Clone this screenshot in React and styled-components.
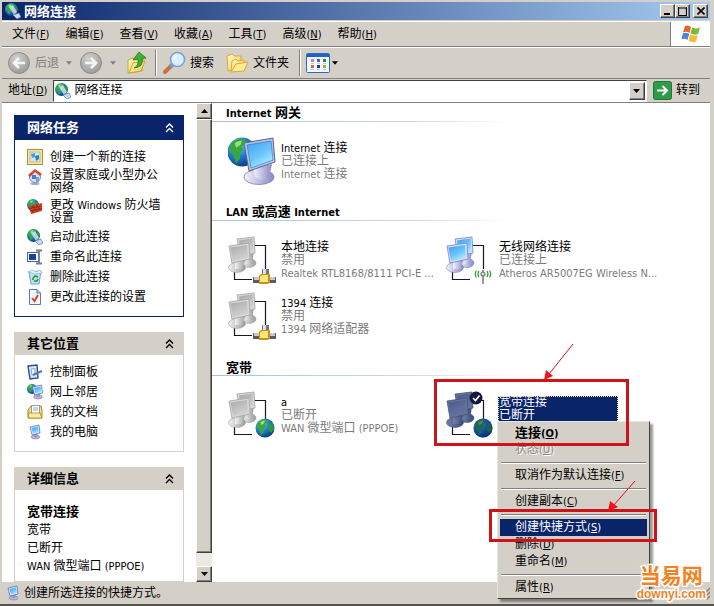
import React from "react";
import styled, { createGlobalStyle, css } from "styled-components";

const face = "#d4d0c8";
const navy = "#0a246a";
const red = "#cf1419";

const GlobalStyle = createGlobalStyle`
  * { box-sizing: border-box; }
  body {
    margin: 0;
    background: ${face};
    color: #000;
    font: 12px/13px "DejaVu Sans Condensed", "Noto Sans CJK SC", sans-serif;
  }
  button, input { font: inherit; color: inherit; }
  h1, h2, h3, p, ul { margin: 0; padding: 0; font: inherit; list-style: none; }
  a { color: inherit; text-decoration: none; }
`;

const raised = css`
  background: ${face};
  border: 1px solid;
  border-color: #fff #404040 #404040 #fff;
  box-shadow: inset -1px -1px 0 #808080;
`;

/* ---------- text ---------- */

const Latin = styled.span`
  font-size: 11px;
`;

function Mixed({ children }) {
  return children
    .split(/([\x20-\x7e]+)/)
    .filter(Boolean)
    .map((part, i) => (/^[\x20-\x7e]/.test(part) ? <Latin key={i}>{part}</Latin> : part));
}

function Mnemonic({ text, letter }) {
  return (
    <span>
      {text}
      <Latin>(<u>{letter}</u>)</Latin>
    </span>
  );
}

/* ---------- drawings ---------- */

const HiddenDefs = styled.svg`
  position: absolute;
`;

function Defs() {
  return (
    <HiddenDefs width="0" height="0" aria-hidden="true">
      <defs>
        <radialGradient id="globe" cx="0.35" cy="0.3" r="0.8">
          <stop offset="0" stopColor="#7fd4ff" />
          <stop offset="0.45" stopColor="#1f7fd8" />
          <stop offset="1" stopColor="#08306e" />
        </radialGradient>
        <linearGradient id="screenOn" x1="0" y1="0" x2="0.6" y2="1">
          <stop offset="0" stopColor="#3f9df0" />
          <stop offset="0.6" stopColor="#6cc6fb" />
          <stop offset="1" stopColor="#a8ecff" />
        </linearGradient>
        <linearGradient id="screenOff" x1="0" y1="0" x2="0.5" y2="1">
          <stop offset="0" stopColor="#a8a8a8" />
          <stop offset="1" stopColor="#d2d2d2" />
        </linearGradient>
        <linearGradient id="screenSel" x1="0" y1="0" x2="0.5" y2="1">
          <stop offset="0" stopColor="#4a5a88" />
          <stop offset="1" stopColor="#65749f" />
        </linearGradient>
        <linearGradient id="baseOn" x1="0" y1="0" x2="1" y2="0">
          <stop offset="0" stopColor="#f4f4fb" />
          <stop offset="1" stopColor="#8c86c6" />
        </linearGradient>
        <linearGradient id="baseOff" x1="0" y1="0" x2="1" y2="0">
          <stop offset="0" stopColor="#f2f2f2" />
          <stop offset="1" stopColor="#999" />
        </linearGradient>
        <linearGradient id="baseSel" x1="0" y1="0" x2="1" y2="0">
          <stop offset="0" stopColor="#7480a4" />
          <stop offset="1" stopColor="#3a4a78" />
        </linearGradient>
        <linearGradient id="folder" x1="0" y1="0" x2="1" y2="1">
          <stop offset="0" stopColor="#fffbd0" />
          <stop offset="1" stopColor="#f3c646" />
        </linearGradient>
        <radialGradient id="greyBall" cx="0.4" cy="0.3" r="0.8">
          <stop offset="0" stopColor="#d2d2d0" />
          <stop offset="1" stopColor="#949494" />
        </radialGradient>
      </defs>
    </HiddenDefs>
  );
}

function Globe({ cx, cy, r }) {
  return (
    <g transform={`translate(${cx} ${cy}) scale(${r / 10})`}>
      <circle r="10" fill="url(#globe)" />
      <path d="M-7 -6.500Q-3 -10 2 -9L3 -6L0 -4L1 -1L-2 1L-1 4L-4 8Q-5 5 -6 2L-9 -1Z" fill="#39a83a" />
      <path d="M4 -8L8 -4L9.500 1L7 5L4 3L3 -1L5 -4Z" fill="#2f9a3a" />
      <path d="M-5 -6Q-3 -8 0 -8L-1 -5L-4 -3Z" fill="#9be07a" />
    </g>
  );
}

const tones = {
  on: { edge: "#6f86c8", rim: "#d5dcf4", screen: "url(#screenOn)", base: "url(#baseOn)" },
  off: { edge: "#a2a2a2", rim: "#d8d8d8", screen: "url(#screenOff)", base: "url(#baseOff)" },
  sel: { edge: "#44537d", rim: "#66749c", screen: "url(#screenSel)", base: "url(#baseSel)" },
};

function Pair({ tone }) {
  const t = tones[tone];
  return (
    <>
      <ellipse cx="21" cy="27" rx="7" ry="4.500" fill={t.base} stroke={t.edge} strokeWidth="0.6" />
      <path d="M17 16L26 15L24 28L18 28Z" fill={t.base} />
      <path d="M9 3L26 1L27 17L12 20Z" fill={t.rim} stroke={t.edge} strokeWidth="0.8" />
      <path d="M11 4.500L24.500 2.500L25.500 15.500L13 18Z" fill={t.screen} />
      <ellipse cx="9" cy="31.500" rx="8.500" ry="5" fill={t.base} stroke={t.edge} strokeWidth="0.6" />
      <path d="M7 24L18 22L14 33L7 33Z" fill={t.base} />
      <path d="M1 10L21 7L22 23L4 27Z" fill={t.rim} stroke={t.edge} strokeWidth="0.8" />
      <path d="M2.500 11.500L19 9L20 21.500L5 25Z" fill={t.screen} />
    </>
  );
}

function Badge({ kind }) {
  if (kind === "wifi")
    return (
      <g fill="none" strokeWidth="1.200">
        <path d="M37 34V48" stroke="#9a9a9a" strokeWidth="2" />
        <circle cx="37" cy="38" r="2" fill="#ddd" stroke="#777" />
        <path d="M33 35Q31 38 33 41M41 35Q43 38 41 41M30.500 34.500Q28 38 30.500 41.500M43.500 34.500Q46 38 43.500 41.500" stroke="#2aa02a" />
      </g>
    );
  if (kind === "plug")
    return (
      <g>
        <rect x="34" y="33" width="7" height="9" fill="#777" />
        <rect x="35" y="33" width="3" height="8" fill="#ddd" />
        <rect x="25" y="41" width="23" height="6" fill="#5c5c5c" />
        <rect x="26" y="41" width="21" height="3" fill="#c9c9c9" />
        <path d="M31 40L33 38H42V46L40 48H31Z" fill="#c8921a" />
        <path d="M32 41L34 39H40V46H32Z" fill="#ffe47c" />
      </g>
    );
  return <Globe cx={37} cy={37} r={9.5} />;
}

function ConnectionIcon({ kind, tone, checked }) {
  if (kind === "gateway")
    return (
      <svg width="48" height="48" viewBox="0 0 48 48" aria-hidden="true">
        <Globe cx={14} cy={15} r={14.5} />
        <ellipse cx="31" cy="40" rx="15" ry="7.500" fill="url(#baseOn)" stroke="#7c78a8" strokeWidth="0.8" />
        <path d="M25 31L44 27L41 40Q34 45 27 40Z" fill="url(#baseOn)" />
        <path d="M16 6L45 1L47 25L21 34Z" fill="#b8c2dd" stroke="#56688f" />
        <path d="M19 8L43 4L45 23L23 31Z" fill="url(#screenOn)" stroke="#2d6fc4" strokeWidth="0.6" />
      </svg>
    );
  return (
    <svg width="48" height="48" viewBox="0 0 48 48" aria-hidden="true">
      <path d="M26 9.500H37.500V33M6.500 36V43.500H24" fill="none" stroke="#15152e" strokeWidth="1.200" />
      <Pair tone={tone} />
      <Badge kind={kind} />
      {tone === "sel" && <circle cx="37" cy="37" r="9.500" fill={navy} opacity="0.5" />}
      {checked && (
        <g>
          <circle cx="30" cy="7" r="6.500" fill="#12193f" />
          <path d="M27 7L29.500 9.500L33.500 4.500" fill="none" stroke="#fff" strokeWidth="1.600" />
        </g>
      )}
    </svg>
  );
}

function MiniMonitor({ x = 0, y = 0 }) {
  return (
    <g transform={`translate(${x} ${y})`}>
      <ellipse cx="6.500" cy="12" rx="4.500" ry="2" fill="#b9b4dc" stroke="#7874a0" strokeWidth="0.5" />
      <path d="M5 8H9L8 12H5Z" fill="#9c98cc" />
      <path d="M1 2L10 0L11 8L3 10Z" fill="#dfe8ff" stroke="#4468b0" strokeWidth="0.7" />
      <path d="M2.500 3L9 1.500L10 7L4 8.500Z" fill="url(#screenOn)" />
    </g>
  );
}

const small = {
  connections: (
    <>
      <Globe cx={6.5} cy={6.5} r={6.5} />
      <path d="M4 4L8 2L12 9L9 12Z" fill="#fff" opacity="0.65" />
      <path d="M8 12L14 10L16 14L12 16Z" fill="#c7dcf2" stroke="#5879a8" strokeWidth="0.7" />
    </>
  ),
  create: (
    <>
      <rect x="0.500" y="0.500" width="15" height="15" fill="#f5e6a6" stroke="#b28f36" />
      <rect x="3" y="3" width="10" height="10" fill="#cfe5fa" stroke="#d2bb6a" />
      <path d="M4 5L8 4V8L5 9Z" fill="#4b9be4" />
      <path d="M8 7L12 6V10L9 12Z" fill="#2f7fce" />
    </>
  ),
  home: (
    <>
      <ellipse cx="8" cy="14.500" rx="4.500" ry="1.500" fill="#a8a5c9" />
      <circle cx="8" cy="8" r="5.500" fill="#d6e6fa" stroke="#7390c8" />
      <path d="M1 6L8 0L15 5L13 7L8 3L3 8Z" fill="#d2482c" />
      <rect x="5" y="6" width="4" height="4" fill="#3f7fd0" />
      <rect x="9" y="8" width="3" height="5" fill="#7a9bd8" />
    </>
  ),
  firewall: (
    <>
      <Globe cx={6} cy={6} r={6} />
      <path d="M2 7L15 4V12L4 15Z" fill="#d6451d" />
      <path d="M2 9.500L15 7M3 12L15 9.500M6 6V9M10 5.500V8M8 9V11.500M12 8V10.500M6 11.500V14.500M10 10.500V13" stroke="#7d1f0a" strokeWidth="0.8" />
    </>
  ),
  rename: (
    <>
      <rect x="0.500" y="3.500" width="11" height="9" fill="#fff" stroke="#4a64a0" />
      <rect x="2" y="5" width="7" height="6" fill="#16439c" />
      <path d="M9 1.500H15M12 1.500V14.500M9 14.500H15" stroke="#6b7ba0" strokeWidth="1.800" />
    </>
  ),
  trash: (
    <>
      <path d="M2 3L14 2L12 15L4 15Z" fill="#bfe0f5" stroke="#6fa3cf" />
      <path d="M1 3L6 1L9 3L13 1L15 4L8 5Z" fill="#e9f6ff" stroke="#7fb0d8" strokeWidth="0.7" />
      <path d="M6 9L8 7L11 8M11 10L10 12L7 12M6 11L6 9" fill="none" stroke="#1d9b36" strokeWidth="1.600" />
    </>
  ),
  settings: (
    <>
      <path d="M2.500 0.500H10L13.500 4V15.500H2.500Z" fill="#f3f6fd" stroke="#5b78b4" />
      <path d="M10 0.500V4H13.500" fill="#b6c7e8" stroke="#5b78b4" />
      <path d="M5 9L7.500 12L11 6" fill="none" stroke="#e03a2c" strokeWidth="1.900" />
    </>
  ),
  panel: (
    <>
      <path d="M1 2L10 1L11 14L3 15Z" fill="#dbe8fa" stroke="#274f91" strokeWidth="1.400" />
      <path d="M4 5L8 4.500L8 10L5 11Z" fill="#fff" stroke="#7fa4d4" />
      <path d="M6 11L15 7" stroke="#4b78b8" strokeWidth="2" />
    </>
  ),
  places: (
    <>
      <Globe cx={5} cy={5} r={5} />
      <MiniMonitor x={4.5} y={1} />
    </>
  ),
  documents: (
    <>
      <path d="M1 6L4 2H14L15 6V14H1Z" fill="#f7df7c" stroke="#a98624" />
      <rect x="4.500" y="1.500" width="8" height="9" fill="#fff" stroke="#9a9a9a" />
      <path d="M6 4H11M6 6H11" stroke="#8fa5c8" />
      <path d="M1 9H13L15 14H2Z" fill="#ffefa5" stroke="#a98624" strokeWidth="0.8" />
    </>
  ),
  computer: <MiniMonitor x={2} y={1} />,
};

function SmallIcon({ name }) {
  return (
    <svg width="16" height="16" viewBox="0 0 16 16" aria-hidden="true">
      {small[name]}
    </svg>
  );
}

function Caret({ up, color = "#000", size = 7 }) {
  return (
    <svg width={size} height="4" viewBox="0 0 7 4" aria-hidden="true">
      <path d={up ? "M0 4H7L3.500 0Z" : "M0 0H7L3.500 4Z"} fill={color} />
    </svg>
  );
}

function Ball({ forward }) {
  return (
    <svg width="24" height="24" viewBox="0 0 24 24" aria-hidden="true">
      <circle cx="12" cy="12" r="10.500" fill="url(#greyBall)" stroke="#8c8c8c" />
      <path
        d={forward ? "M6 12H17M12 7L17 12L12 17" : "M18 12H7M12 7L7 12L12 17"}
        fill="none"
        stroke="#f4f4f2"
        strokeWidth="2.600"
      />
    </svg>
  );
}

function FolderUp() {
  return (
    <svg width="22" height="24" viewBox="0 0 22 24" aria-hidden="true">
      <path d="M2 9L7 7L9 9L17 8L16 20L2 22Z" fill="url(#folder)" stroke="#d0a332" />
      <path d="M3 22L7 12L19 10L15 20Z" fill="url(#folder)" stroke="#d0a332" />
      <path d="M8 17Q13 15 12 8L7 9L13 1L20 7L16 7.500Q18 16 8 17Z" fill="#3fb234" stroke="#1d7a1c" strokeWidth="0.8" />
    </svg>
  );
}

function Magnifier() {
  return (
    <svg width="24" height="24" viewBox="0 0 24 24" aria-hidden="true">
      <path d="M10 14L3 21" stroke="#c9733c" strokeWidth="4" strokeLinecap="round" />
      <path d="M11 13L8 16" stroke="#8792b8" strokeWidth="4" />
      <circle cx="15.500" cy="8.500" r="7" fill="#d8f0ff" stroke="#7f9ed8" strokeWidth="1.600" />
      <path d="M11 8Q12 4 16 4Q13 6 13 9Z" fill="#fff" />
    </svg>
  );
}

function Folders() {
  return (
    <svg width="23" height="20" viewBox="0 0 23 20" aria-hidden="true">
      <path d="M1 3L6 1L8 3L15 3V14L2 18Z" fill="url(#folder)" stroke="#d8ab38" />
      <path d="M6 8L10 6L12 8L18 7L18 17L5 18Z" fill="url(#folder)" stroke="#d8ab38" />
      <path d="M5 19L10 11L22 9L18 18Z" fill="#ffeb94" stroke="#d8ab38" />
    </svg>
  );
}

function Views() {
  const dots = [["#b08fc0", "#4a62c8", "#348a3c"], ["#e2673c", "#1b3f90", "#c8a030"]];
  return (
    <svg width="24" height="20" viewBox="0 0 24 20" aria-hidden="true">
      <rect x="0.500" y="0.500" width="23" height="19" rx="1" fill="#f4f8ff" stroke="#2a6ac0" />
      <rect x="1" y="1" width="22" height="3" fill="#1f62c6" />
      {dots.map((row, y) =>
        row.map((c, x) => <rect key={c} x={5 + x * 6} y={6 + y * 6} width="3" height="3" fill={c} />)
      )}
      {dots.map((row, y) =>
        row.map((c, x) => <rect key={c} x={5 + x * 6} y={10 + y * 6} width="3" height="1" fill="#b9c6de" />)
      )}
    </svg>
  );
}

function Flag() {
  return (
    <svg width="20" height="18" viewBox="0 0 20 18" aria-hidden="true">
      <path d="M4 1Q7 -0.500 10 2L8.500 8Q5.500 6 2 7.500Z" fill="#e8632a" />
      <path d="M11 2.500Q15 4.500 19 2.500L17 9Q13 10.500 9.500 8.500Z" fill="#7cb83c" />
      <path d="M1.800 8.500Q5 7 8.200 9L6.500 15Q4 13 0.500 14.500Z" fill="#4a86d8" />
      <path d="M9.300 9.500Q13 11.500 16.700 10L15 16.500Q11 18 7.500 15.500Z" fill="#f4bd2e" />
    </svg>
  );
}

function GoIcon() {
  return (
    <svg width="19" height="19" viewBox="0 0 19 19" aria-hidden="true">
      <rect x="0.500" y="0.500" width="18" height="18" rx="2" fill="#2e9b46" stroke="#1d7a34" />
      <path d="M4 9.500H14M9.500 5L14 9.500L9.500 14" fill="none" stroke="#fff" strokeWidth="2" />
    </svg>
  );
}

/* ---------- window frame ---------- */

const Frame = styled.div`
  position: relative;
  display: flex;
  flex-direction: column;
  height: 100vh;
  padding: 2px 4px 0 2px;
  overflow: hidden;
  background: ${face};
  border-bottom: 2px solid #55534e;
`;

const TitleBar = styled.header`
  display: flex;
  align-items: center;
  gap: 3px;
  flex: none;
  height: 18px;
  padding: 0 2px 0 3px;
  background: linear-gradient(90deg, ${navy}, #a6caf0);
  color: #fff;
`;

const Title = styled.h1`
  flex: 1;
  font-size: 13px;
  font-weight: 700;
`;

const CaptionGroup = styled.div`
  display: flex;
`;

const CaptionButton = styled.button`
  ${raised}
  display: grid;
  place-items: center;
  width: 15px;
  height: 14px;
  padding: 0;
`;

const MenuRow = styled.div`
  display: flex;
  flex: none;
  height: 26px;
  margin-top: 1px;
  border-top: 1px solid #fff;
  border-bottom: 1px solid #808080;
`;

const MenuBar = styled.nav`
  display: flex;
  flex: 1;
  gap: 16px;
  padding-left: 10px;
  border-right: 1px solid #808080;
`;

const MenuButton = styled.button`
  padding: 1px 0 0;
  border: 0;
  background: none;
  white-space: nowrap;
`;

const Throbber = styled.div`
  display: grid;
  place-items: center;
  width: 39px;
  background: #fff;
`;

const ToolBar = styled.div`
  display: flex;
  align-items: center;
  flex: none;
  height: 32px;
  padding-left: 5px;
  border-top: 1px solid #fff;
  border-bottom: 1px solid #808080;
`;

const ToolButton = styled.button`
  display: flex;
  align-items: center;
  gap: 4px;
  padding: 0;
  margin-right: ${(p) => p.$after || 7}px;
  border: 0;
  background: none;
  color: ${(p) => (p.disabled ? "#808080" : "#000")};
  white-space: nowrap;
`;

const ToolDivider = styled.div`
  width: 2px;
  height: 26px;
  margin-right: 5px;
  border-left: 1px solid #808080;
  border-right: 1px solid #fff;
`;

const AddressBar = styled.form`
  display: flex;
  align-items: center;
  flex: none;
  gap: 6px;
  height: 24px;
  padding: 0 9px 0 6px;
  border-bottom: 1px solid #808080;
`;

const AddressBox = styled.div`
  display: flex;
  align-items: center;
  flex: 1;
  height: 22px;
  padding: 1px;
  border: 1px solid;
  border-color: #404040 #fff #fff #404040;
  background: #fff;
`;

const AddressInput = styled.input`
  flex: 1;
  min-width: 0;
  padding: 0 3px;
  border: 0;
  outline: 0;
  background: none;
`;

const DropButton = styled.button`
  ${raised}
  display: grid;
  place-items: center;
  width: 16px;
  height: 18px;
  padding: 0;
`;

/* ---------- body ---------- */

const Body = styled.div`
  display: flex;
  flex: 1;
  min-height: 0;
  background: #fff;
`;

const Sidebar = styled.aside`
  display: flex;
  flex-direction: column;
  flex: none;
  gap: 15px;
  width: 194px;
  padding: 12px 12px 0;
  overflow: hidden;
`;

const Panel = styled.section`
  flex: ${(p) => (p.$fill ? "1 0 auto" : "none")};
  border: 1px solid ${(p) => (p.$primary ? navy : face)};
  border-top: 0;
`;

const PanelHead = styled.h2`
  display: flex;
  align-items: center;
  justify-content: space-between;
  height: ${(p) => (p.$primary ? 25 : 23)}px;
  padding: 0 9px 0 12px;
  background: ${(p) => (p.$primary ? navy : face)};
  color: ${(p) => (p.$primary ? "#fff" : "#000")};
  font-size: 13px;
  font-weight: 700;
`;

const CollapseButton = styled.button`
  display: grid;
  padding: 0;
  border: 0;
  background: none;
`;

const TaskList = styled.ul`
  display: grid;
  gap: 4px;
  padding: 9px 12px 11px;
`;

const Task = styled.a`
  display: flex;
  gap: 7px;
`;

const TaskText = styled.span`
  display: grid;
  align-content: center;
  min-height: 16px;
  white-space: pre;
`;

const Details = styled.div`
  padding: 13px 12px 0;
  line-height: 18px;
  white-space: nowrap;
`;

const DetailName = styled.h3`
  font-size: 13px;
  font-weight: 700;
`;

const ScrollBar = styled.div`
  display: flex;
  flex-direction: column;
  flex: none;
  width: 16px;
  background: #ebe9e4;
`;

const ScrollButton = styled.button`
  ${raised}
  display: grid;
  place-items: center;
  height: 16px;
  padding: 0;
`;

const ScrollThumb = styled.div`
  ${raised}
  flex: 1;
  margin-bottom: 13px;
`;

const Content = styled.main`
  flex: 1;
  min-width: 0;
`;

const GroupTitle = styled.h2`
  display: flex;
  flex-direction: column;
  justify-content: flex-end;
  height: ${(p) => (p.$first ? 19 : 32)}px;
  padding-left: 14px;
  border-bottom: 1px solid;
  border-image: linear-gradient(90deg, #a9c4dc, #c9d9ea 40%, #fff 60%) 1;
  font-size: 13px;
  line-height: 15px;
  font-weight: 700;
`;

const Tiles = styled.div`
  display: grid;
  grid-template-columns: repeat(auto-fill, 218px);
  grid-auto-rows: 56px;
  padding: 11px 0 0 16px;
`;

const Tile = styled.div`
  display: flex;
  align-items: center;
  gap: ${(p) => (p.$selected ? 4 : 5)}px;
`;

const TileText = styled.div`
  min-height: 39px;
  color: #7b7b7b;
  white-space: nowrap;
  ${(p) =>
    p.$selected &&
    css`
      width: 120px;
      padding-left: 1px;
      background: ${navy};
      color: #fff;
      outline: 1px dotted #f0e0a0;
      outline-offset: -1px;
    `}
`;

const TileName = styled.p`
  color: ${(p) => (p.$selected ? "#fff" : "#000")};
`;

const StatusBar = styled.footer`
  display: flex;
  align-items: center;
  justify-content: space-between;
  flex: none;
  height: 22px;
  padding-left: 3px;
`;

const StatusText = styled.p`
  display: flex;
  align-items: center;
  gap: 3px;
`;

/* ---------- overlays ---------- */

const ContextMenu = styled.div`
  position: absolute;
  left: 497px;
  top: 421px;
  width: 153px;
  padding: 2px;
  background: ${face};
  border: 1px solid;
  border-color: #e8e6e0 #404040 #404040 #e8e6e0;
  box-shadow: 3px 3px 2px rgba(0, 0, 0, 0.4);
`;

const ContextItem = styled.button`
  display: block;
  width: 100%;
  height: 17px;
  padding: 0 0 0 15px;
  border: 0;
  background: ${(p) => (p.$active ? navy : "none")};
  color: ${(p) => (p.disabled ? "#8c8a84" : p.$active ? "#fff" : "#000")};
  text-shadow: ${(p) => (p.disabled ? "1px 1px 0 #fff" : "none")};
  font-size: ${(p) => (p.$strong ? 13 : 12)}px;
  font-weight: ${(p) => (p.$strong ? 700 : 400)};
  line-height: 17px;
  text-align: left;
`;

const ContextDivider = styled.hr`
  height: 2px;
  margin: 4px 1px 3px;
  border: 0;
  border-top: 1px solid #808080;
  border-bottom: 1px solid #fff;
`;

const Highlight = styled.div`
  position: absolute;
  left: ${(p) => p.$x}px;
  top: ${(p) => p.$y}px;
  width: ${(p) => p.$w}px;
  height: ${(p) => p.$h}px;
  border: 3px solid ${red};
`;

const Arrow = styled.svg`
  position: absolute;
  left: ${(p) => p.$x}px;
  top: ${(p) => p.$y}px;
`;

const Watermark = styled.div`
  position: absolute;
  right: 8px;
  bottom: 3px;
  text-align: center;
  color: #f5811f;
  paint-order: stroke fill;
  -webkit-text-stroke: 3px #fff;
  font-weight: 700;
`;

const MarkName = styled.p`
  font-size: 21px;
  line-height: 21px;
`;

const MarkSite = styled.p`
  font-family: "Liberation Sans", sans-serif;
  font-size: 12px;
  line-height: 14px;
`;

/* ---------- data ---------- */

const menus = [["文件", "F"], ["编辑", "E"], ["查看", "V"], ["收藏", "A"], ["工具", "T"], ["高级", "N"], ["帮助", "H"]];

const tasks = [
  ["create", "创建一个新的连接"],
  ["home", "设置家庭或小型办公\n网络"],
  ["firewall", "更改 Windows 防火墙\n设置"],
  ["connections", "启动此连接"],
  ["rename", "重命名此连接"],
  ["trash", "删除此连接"],
  ["settings", "更改此连接的设置"],
];

const places = [["panel", "控制面板"], ["places", "网上邻居"], ["documents", "我的文档"], ["computer", "我的电脑"]];

const groups = [
  { title: "Internet 网关", items: [{ kind: "gateway", tone: "on", name: "Internet 连接", lines: ["已连接上", "Internet 连接"] }] },
  {
    title: "LAN 或高速 Internet",
    items: [
      { kind: "plug", tone: "off", name: "本地连接", lines: ["禁用", "Realtek RTL8168/8111 PCI-E ..."] },
      { kind: "wifi", tone: "on", name: "无线网络连接", lines: ["已连接上", "Atheros AR5007EG Wireless N..."] },
      { kind: "plug", tone: "off", name: "1394 连接", lines: ["禁用", "1394 网络适配器"] },
    ],
  },
  {
    title: "宽带",
    items: [
      { kind: "globe", tone: "off", name: "a", lines: ["已断开", "WAN 微型端口 (PPPOE)"] },
      { kind: "globe", tone: "sel", name: "宽带连接", lines: ["已断开"], selected: true },
    ],
  },
];

const contextItems = [
  { text: "连接", letter: "O", strong: true },
  { text: "状态", letter: "U", disabled: true },
  null,
  { text: "取消作为默认连接", letter: "F" },
  null,
  { text: "创建副本", letter: "C" },
  null,
  { text: "创建快捷方式", letter: "S", active: true },
  { text: "删除", letter: "D" },
  { text: "重命名", letter: "M" },
  null,
  { text: "属性", letter: "R" },
];

function SidePanel({ title, primary, fill, children }) {
  return (
    <Panel $primary={primary} $fill={fill}>
      <PanelHead $primary={primary}>
        {title}
        <CollapseButton aria-label={title}>
          <svg width="9" height="10" viewBox="0 0 9 10" aria-hidden="true">
            <path d="M1 4.500L4.500 1L8 4.500M1 9L4.500 5.500L8 9" fill="none" stroke="currentColor" strokeWidth="1.400" />
          </svg>
        </CollapseButton>
      </PanelHead>
      {children}
    </Panel>
  );
}

function Tasks({ items }) {
  return (
    <TaskList>
      {items.map(([icon, text]) => (
        <li key={text}>
          <Task href="#">
            <SmallIcon name={icon} />
            <TaskText><span><Mixed>{text}</Mixed></span></TaskText>
          </Task>
        </li>
      ))}
    </TaskList>
  );
}

export default function App() {
  return (
    <Frame>
      <GlobalStyle />
      <Defs />
      <TitleBar>
        <SmallIcon name="connections" />
        <Title>网络连接</Title>
        <CaptionGroup>
          <CaptionButton aria-label="最小化">
            <svg width="8" height="8" viewBox="0 0 8 8"><path d="M0 7H6" stroke="#000" strokeWidth="2" /></svg>
          </CaptionButton>
          <CaptionButton aria-label="最大化">
            <svg width="9" height="9" viewBox="0 0 9 9"><path d="M0.500 0V8.500H8.500V0M0 1H9" fill="none" stroke="#000" strokeWidth="1.200" /></svg>
          </CaptionButton>
        </CaptionGroup>
        <CaptionButton aria-label="关闭">
          <svg width="8" height="8" viewBox="0 0 8 8"><path d="M0.500 0.500L7.500 7.500M7.500 0.500L0.500 7.500" stroke="#000" strokeWidth="1.600" /></svg>
        </CaptionButton>
      </TitleBar>

      <MenuRow>
        <MenuBar>
          {menus.map(([text, letter]) => (
            <MenuButton key={letter}><Mnemonic text={text} letter={letter} /></MenuButton>
          ))}
        </MenuBar>
        <Throbber><Flag /></Throbber>
      </MenuRow>

      <ToolBar>
        <ToolButton disabled><Ball />后退</ToolButton>
        <ToolButton disabled aria-label="后退列表"><Caret color="#808080" size={6} /></ToolButton>
        <ToolButton disabled aria-label="前进"><Ball forward /></ToolButton>
        <ToolButton disabled aria-label="前进列表" $after={10}><Caret color="#808080" size={6} /></ToolButton>
        <ToolButton aria-label="向上"><FolderUp /></ToolButton>
        <ToolDivider />
        <ToolButton $after={12}><Magnifier />搜索</ToolButton>
        <ToolButton $after={10}><Folders />文件夹</ToolButton>
        <ToolDivider />
        <ToolButton aria-label="查看" $after={2}><Views /></ToolButton>
        <ToolButton aria-label="查看方式"><Caret size={6} /></ToolButton>
      </ToolBar>

      <AddressBar onSubmit={(e) => e.preventDefault()}>
        <label htmlFor="address"><Mnemonic text="地址" letter="D" /></label>
        <AddressBox>
          <SmallIcon name="connections" />
          <AddressInput id="address" defaultValue="网络连接" />
          <DropButton type="button" aria-label="地址列表"><Caret /></DropButton>
        </AddressBox>
        <ToolButton $after={1}><GoIcon />转到</ToolButton>
      </AddressBar>

      <Body>
        <Sidebar>
          <SidePanel title="网络任务" primary><Tasks items={tasks} /></SidePanel>
          <SidePanel title="其它位置"><Tasks items={places} /></SidePanel>
          <SidePanel title="详细信息" fill>
            <Details>
              <DetailName>宽带连接</DetailName>
              <p>宽带</p>
              <p>已断开</p>
              <p><Mixed>WAN 微型端口 (PPPOE)</Mixed></p>
            </Details>
          </SidePanel>
        </Sidebar>
        <ScrollBar>
          <ScrollButton aria-label="向上滚动"><Caret up /></ScrollButton>
          <ScrollThumb />
          <ScrollButton aria-label="向下滚动"><Caret /></ScrollButton>
        </ScrollBar>
        <Content>
          {groups.map((group, i) => (
            <section key={group.title}>
              <GroupTitle $first={i === 0}><span><Mixed>{group.title}</Mixed></span></GroupTitle>
              <Tiles>
                {group.items.map((item) => (
                  <Tile key={item.name} $selected={item.selected}>
                    <ConnectionIcon kind={item.kind} tone={item.tone} checked={item.selected} />
                    <TileText $selected={item.selected}>
                      <TileName $selected={item.selected}><Mixed>{item.name}</Mixed></TileName>
                      {item.lines.map((line) => <p key={line}><Mixed>{line}</Mixed></p>)}
                    </TileText>
                  </Tile>
                ))}
              </Tiles>
            </section>
          ))}
        </Content>
      </Body>

      <StatusBar>
        <StatusText><SmallIcon name="computer" />创建所选连接的快捷方式。</StatusText>
        <svg width="13" height="13" viewBox="0 0 13 13" aria-hidden="true">
          <path d="M1 13L13 1M5 13L13 5M9 13L13 9" stroke="#808080" strokeWidth="1.500" />
        </svg>
      </StatusBar>

      <ContextMenu role="menu">
        {contextItems.map((item, i) =>
          item ? (
            <ContextItem key={i} role="menuitem" disabled={item.disabled} $active={item.active} $strong={item.strong}>
              <Mnemonic text={item.text} letter={item.letter} />
            </ContextItem>
          ) : (
            <ContextDivider key={i} />
          )
        )}
      </ContextMenu>

      <Highlight $x={434} $y={379} $w={195} $h={67} />
      <Highlight $x={489} $y={509} $w={168} $h={33} />
      <Arrow $x={543} $y={343} width="32" height="38" viewBox="0 0 32 38" aria-hidden="true">
        <path d="M30 1L6 31" stroke={red} />
        <path d="M1 37L3 27L10 33Z" fill="#f0141a" />
      </Arrow>
      <Arrow $x={607} $y={480} width="30" height="32" viewBox="0 0 30 32" aria-hidden="true">
        <path d="M28 1L6 26" stroke={red} />
        <path d="M1 31L3 21L11 27Z" fill="#f0141a" />
      </Arrow>

      <Watermark>
        <MarkName>当易网</MarkName>
        <MarkSite>downyi.com</MarkSite>
      </Watermark>
    </Frame>
  );
}
